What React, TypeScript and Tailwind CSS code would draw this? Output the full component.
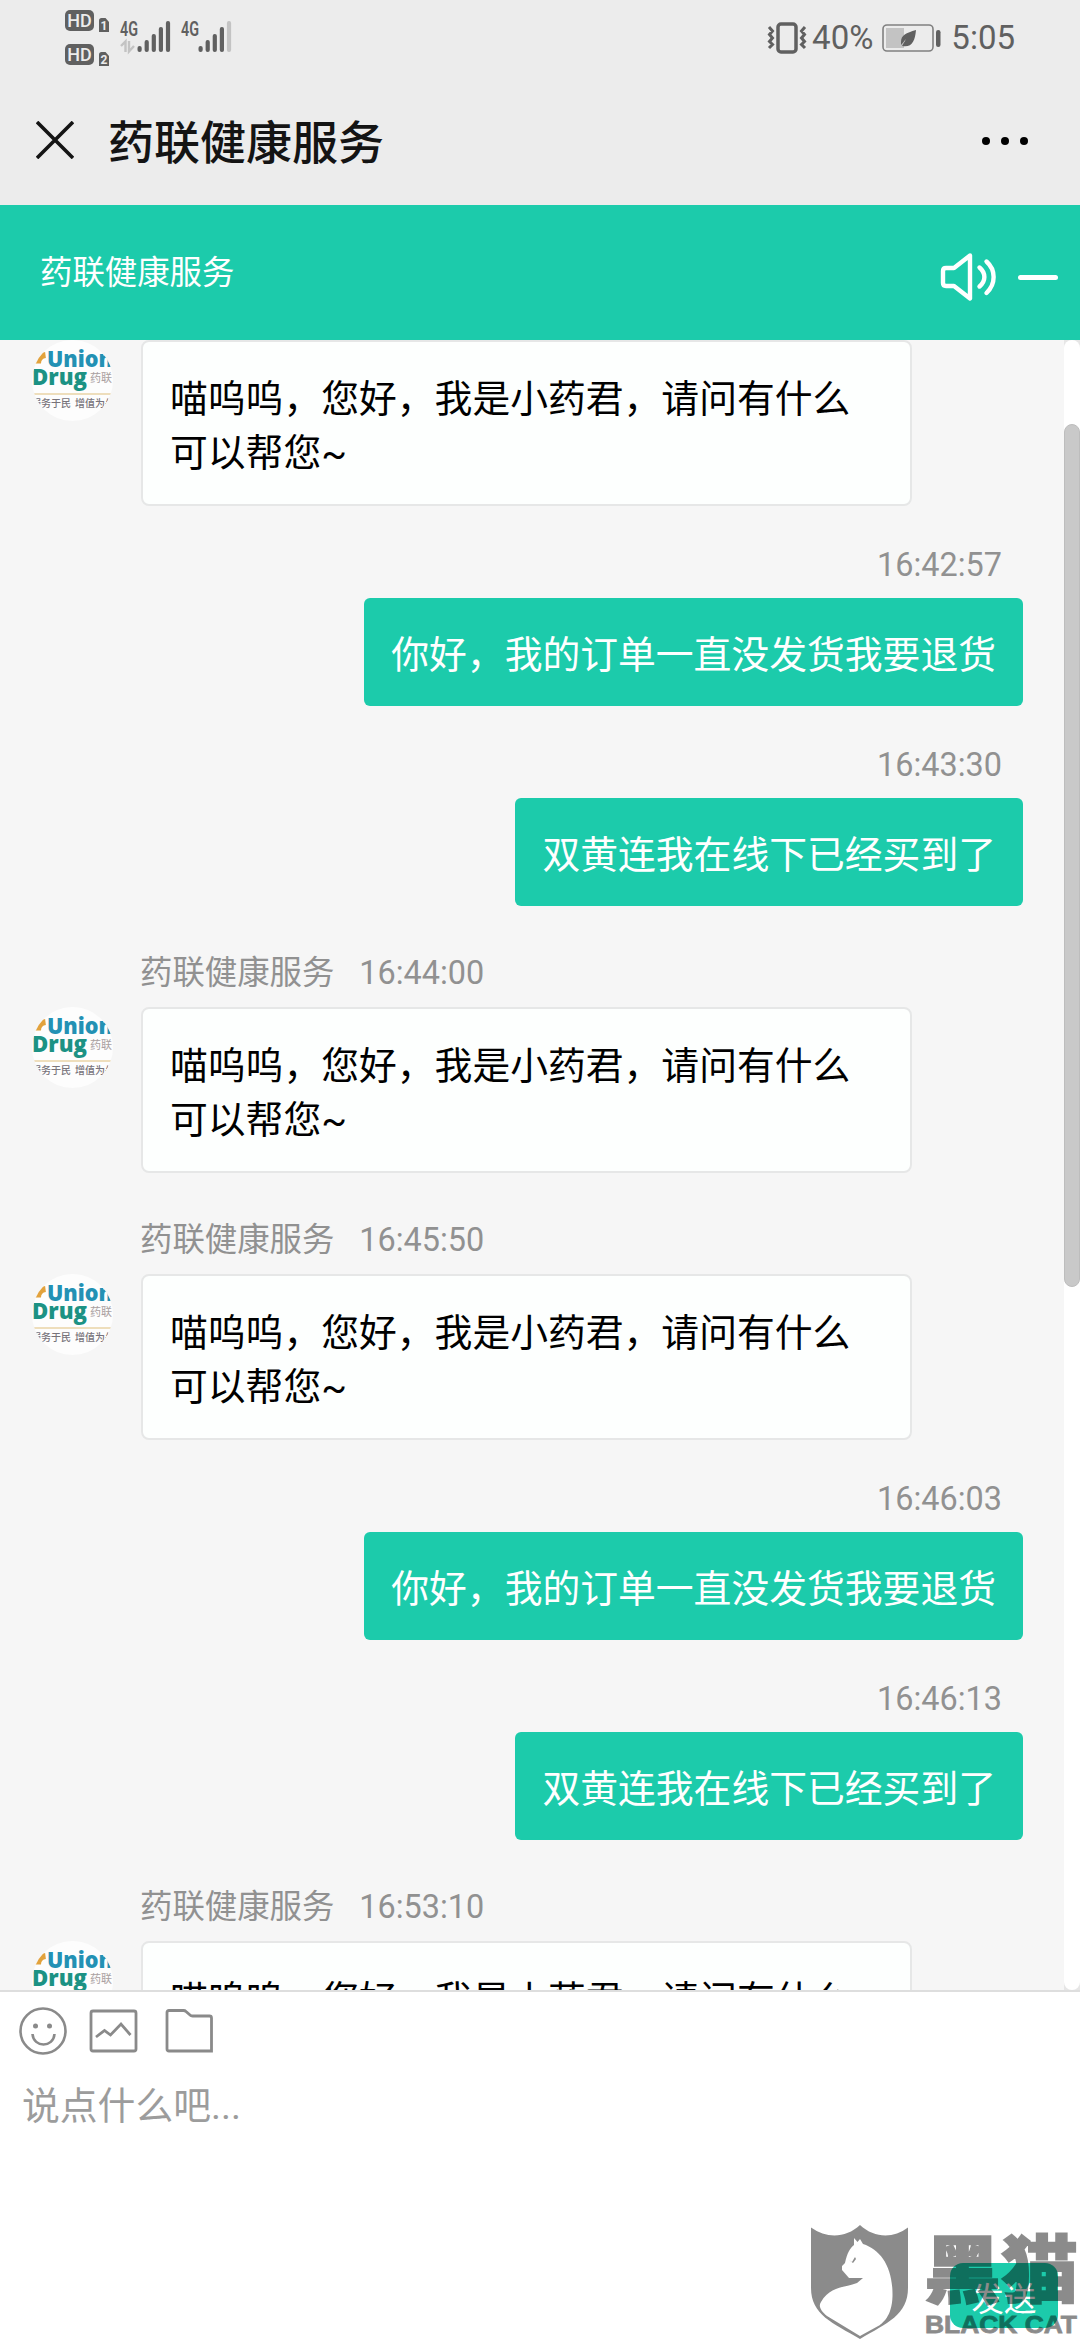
interface Message {
	id: number;
	from: "agent" | "user";
	time?: string;
	text: string;
}

const AGENT_NAME = "药联健康服务";
const GREETING = "喵呜呜，您好，我是小药君，请问有什么可以帮您~";

const messages: Message[] = [
	{ id: 1, from: "agent", text: GREETING },
	{ id: 2, from: "user", time: "16:42:57", text: "你好，我的订单一直没发货我要退货" },
	{ id: 3, from: "user", time: "16:43:30", text: "双黄连我在线下已经买到了" },
	{ id: 4, from: "agent", time: "16:44:00", text: GREETING },
	{ id: 5, from: "agent", time: "16:45:50", text: GREETING },
	{ id: 6, from: "user", time: "16:46:03", text: "你好，我的订单一直没发货我要退货" },
	{ id: 7, from: "user", time: "16:46:13", text: "双黄连我在线下已经买到了" },
	{ id: 8, from: "agent", time: "16:53:10", text: GREETING },
];

function SimBadge({ sim }: { sim: string }) {
	return (
		<div className="flex h-[22px] items-end gap-[5px]">
			<div className="flex h-[21px] w-[29px] items-center justify-center self-start rounded-[5px] bg-[#606060] text-[18px] leading-[21px] font-medium text-[#ececec]">
				HD
			</div>
			<svg className="overflow-visible" width="10" height="14" viewBox="0 0 10 14">
				<path d="M0 2.5Q0 0 2.5 0H6.5L10 4V14H0Z" fill="#606060" />
				<text x="5" y="12" fontSize="12" fontWeight="700" textAnchor="middle" fill="#ececec">
					{sim}
				</text>
			</svg>
		</div>
	);
}

function Signal({ full }: { full?: boolean }) {
	const tops = [26, 20, 14, 7, 1];
	return (
		<svg className="overflow-visible" width="50" height="34" viewBox="0 0 50 34">
			<text x="0" y="15.500" fontSize="20" fontWeight="600" fill="#606060" textLength="18" lengthAdjust="spacingAndGlyphs">
				4G
			</text>
			{full && (
				<path d="M1 26L5.5 21.5V32M9 21V31.5L14 26" fill="none" stroke="#c3c3c3" strokeWidth="2.4" />
			)}
			{tops.map((top, i) => (
				<rect
					key={top}
					x={17.5 + i * 7.1}
					y={top}
					width="4.2"
					height={32 - top}
					rx="2"
					fill={!full && i === 4 ? "#c3c3c3" : "#606060"}
				/>
			))}
		</svg>
	);
}

function StatusBar() {
	return (
		<div className="flex h-[76px] items-start pr-[65px] pl-[65px] text-[#606060]">
			<div className="mt-2.5 flex flex-col gap-3">
				<SimBadge sim="1" />
				<SimBadge sim="2" />
			</div>
			<div className="mt-5 ml-[11px] flex gap-[11px]">
				<Signal full />
				<Signal />
			</div>
			<div className="ml-auto flex h-[76px] items-center text-[33px] leading-10">
				<svg width="40" height="32" viewBox="0 0 40 32" fill="none" stroke="#606060">
					<rect x="11" y="2" width="18" height="28" rx="3" strokeWidth="3.5" />
					<path d="M2 5L5.5 9L2.5 12.5L5.5 16L2.5 19.5L5.5 22.5L2 26M38 5L34.5 9L37.5 12.5L34.5 16L37.5 19.5L34.5 22.5L38 26" strokeWidth="3" />
				</svg>
				<span className="ml-[5px]">40%</span>
				<svg className="ml-[9px]" width="59" height="28" viewBox="0 0 59 28">
					<rect x="1" y="1" width="50" height="26" rx="4" fill="none" stroke="#808080" strokeWidth="1.6" />
					<rect x="4" y="4" width="18" height="20" fill="#c3c3c3" />
					<path d="M34 6C24 9 19 11 19 18L19 21L24 15L20 22C30 24 33 17 34 6Z" fill="#606060" />
					<rect x="54" y="6" width="4.5" height="17" rx="2.2" fill="#606060" />
				</svg>
				<span className="ml-[10px]">5:05</span>
			</div>
		</div>
	);
}

function WebviewHeader() {
	return (
		<div className="flex h-[129px] items-center pr-[52px] pl-9">
			<svg className="-mt-0.5" width="38" height="38" viewBox="0 0 38 38" stroke="#141414" strokeWidth="3.6">
				<path d="M1 1L37 37M37 1L1 37" />
			</svg>
			<h1 className="mt-1 ml-[34px] text-[46px] leading-[54px] font-medium text-[#141414]">{AGENT_NAME}</h1>
			<div className="ml-auto flex gap-[11px]">
				<i className="size-2 rounded-full bg-black" />
				<i className="size-2 rounded-full bg-black" />
				<i className="size-2 rounded-full bg-black" />
			</div>
		</div>
	);
}

function ChatHeader() {
	return (
		<header className="flex h-[135px] items-center bg-[#1ccbab] pr-[22px] pl-10 text-white">
			<span className="text-[32.4px] leading-10">{AGENT_NAME}</span>
			<svg
				className="mt-2 ml-auto"
				width="56"
				height="50"
				viewBox="0 0 56 50"
				fill="none"
				stroke="currentColor"
				strokeWidth="4.4"
				strokeLinecap="round"
				strokeLinejoin="round"
			>
				<path d="M14 16H6Q3 16 3 19V31Q3 34 6 34H14L30 46.500V3.500Z" />
				<path d="M39.500 15.500C46 21 46 29 39.500 34.500M46.500 9.500C56 18 56 32 46.500 41" />
			</svg>
			<div className="mt-[9px] ml-[22px] h-[5px] w-10 rounded-full bg-white" />
		</header>
	);
}

function Avatar() {
	return (
		<svg className="size-[81px] shrink-0 overflow-hidden rounded-full bg-[#fdfdfd]" viewBox="0 0 81 81">
			<path d="M6 23.500Q6 16 13.500 15" fill="none" stroke="#e2a23c" strokeWidth="6" />
			<g className="font-['Open_Sans']" fontWeight="800">
				<text x="15" y="27" fontSize="23" fill="#2391b4" textLength="66" lengthAdjust="spacingAndGlyphs">
					Union
				</text>
				<text x="0" y="44.500" fontSize="23" fill="#1c9284" textLength="55" lengthAdjust="spacingAndGlyphs">
					Drug
				</text>
			</g>
			<text x="58" y="42" fontSize="11" fill="#a9a0a0">
				药联
			</text>
			<path d="M2 54H79" stroke="#e8d3a6" strokeWidth="1.500" />
			<text x="-1" y="67" fontSize="10" fontWeight="500" fill="#77737a">
				服务于民
			</text>
			<text x="43" y="67" fontSize="10" fontWeight="500" fill="#77737a">
				增值为先
			</text>
		</svg>
	);
}

function AgentMessage({ message }: { message: Message }) {
	return (
		<div className="pl-[32px]">
			{message.time && (
				<div className="flex h-[101px] items-center gap-[25px] pt-[33px] pl-[108px] text-[32.4px] leading-10 text-[#919191]">
					<span>{AGENT_NAME}</span>
					<time>{message.time}</time>
				</div>
			)}
			<div className="flex items-start gap-7">
				<Avatar />
				<div className="h-[166px] w-[771px] rounded-lg border-[2.7px] border-[#e6e7e7] bg-[#fdfffe] px-[27px] pt-[30px] text-[37.8px] leading-[54px] text-black">
					{message.text}
				</div>
			</div>
		</div>
	);
}

function UserMessage({ message }: { message: Message }) {
	return (
		<div className="flex flex-col items-end pr-[41px]">
			<time className="flex h-[92.300px] items-center pt-[26px] pr-[21px] text-[32.4px] leading-10 text-[#919191]">
				{message.time}
			</time>
			<div className="h-[107.600px] rounded-md bg-[#1ccbab] px-[27px] pt-[30px] text-[37.8px] leading-[54px] text-white">
				{message.text}
			</div>
		</div>
	);
}

function Composer() {
	return (
		<footer className="flex flex-1 flex-col border-t-2 border-[#dedede] bg-white">
			<div className="flex h-[78px] items-center pl-[19px] text-[#8a8a8a]">
				<svg width="48" height="48" viewBox="0 0 48 48" fill="none" stroke="currentColor" strokeWidth="2.600">
					<circle cx="24" cy="24" r="22.500" />
					<circle cx="16.500" cy="19" r="2.500" fill="currentColor" stroke="none" />
					<circle cx="30.500" cy="19" r="2.500" fill="currentColor" stroke="none" />
					<path d="M13.500 27C14.500 41 34.500 41 35.500 27" />
				</svg>
				<svg className="ml-[22px]" width="49" height="44" viewBox="0 0 49 44" fill="none" stroke="currentColor" strokeWidth="2.800">
					<rect x="2" y="2" width="45" height="40" rx="2" />
					<path d="M7 28L15.500 21.500L21.500 26L32 15L41.500 26" />
				</svg>
				<svg className="ml-[27px]" width="49" height="44" viewBox="0 0 49 44" fill="none" stroke="currentColor" strokeWidth="2.800">
					<path d="M4 1.500H18.500Q20 1.500 21 2.500L25 6Q26 7 27.500 7H44.500Q46.500 7 46.500 9V42H4Q2 42 2 40V3.500Q2 1.500 4 1.500Z" />
				</svg>
			</div>
			<div className="mt-4 pl-[22px] text-[37.8px] leading-[40px] text-[#9c9c9c]">说点什么吧...</div>
			<button className="mt-auto mr-[22px] mb-3 flex h-[65px] w-[108px] items-center justify-center self-end rounded-[13px] bg-[#1ccbab] pt-2 text-[32.4px] leading-10 text-white">
				发送
			</button>
		</footer>
	);
}

// Semi-transparent stamp over the bottom right corner
function Watermark() {
	return (
		<svg className="absolute right-0 bottom-0 opacity-45" width="280" height="120" viewBox="0 0 280 120">
			<path
				fillRule="evenodd"
				d="M11 7.500C27 19 46 18 60 5C74 18 93 19 108 7.500V68C108 95 87 103 60 119C33 103 11 95 11 68ZM54 18L57.500 22L60 19L63 24C81 30 93 47 92.500 76C92 97 82 103 80 105L60 116L27 96C21 91 18 86 21 82C30 66 44 68 57 63L63 58H49L42 50V46L45 43C47 33 50 28 54 25ZM49 40L52 42L55 37L56 39L53 43Z"
			/>
			<text
				x="124"
				y="77"
				fontSize="74"
				fontWeight="900"
				stroke="#000"
				strokeWidth="1.500"
				className="font-['Noto_Sans_CJK_SC']"
				textLength="154"
				lengthAdjust="spacingAndGlyphs"
			>
				黑猫
			</text>
			<text
				x="125"
				y="112.500"
				fontSize="23"
				fontWeight="700"
				stroke="#000"
				strokeWidth="0.800"
				className="font-['Liberation_Sans']"
				textLength="152"
				lengthAdjust="spacingAndGlyphs"
			>
				BLACK CAT
			</text>
		</svg>
	);
}

export default function App() {
	return (
		<div className="relative flex h-[2340px] w-[1080px] flex-col overflow-hidden bg-[#ececec] font-['Roboto','Noto_Sans_CJK_SC',sans-serif]">
			<StatusBar />
			<WebviewHeader />
			<ChatHeader />
			<main className="flex h-[1650px] overflow-hidden bg-[#f6f6f6]">
				<div className="flex-1">
					{messages.map((message) =>
						message.from === "agent" ? (
							<AgentMessage key={message.id} message={message} />
						) : (
							<UserMessage key={message.id} message={message} />
						),
					)}
				</div>
				<div className="w-4 bg-[#e6e6e6]">
					<div className="h-full rounded-lg bg-white pt-[84px]">
						<div className="h-[863px] rounded-full border border-[#bdbdbd] bg-[#c9c9c9]" />
					</div>
				</div>
			</main>
			<Composer />
			<Watermark />
		</div>
	);
}
